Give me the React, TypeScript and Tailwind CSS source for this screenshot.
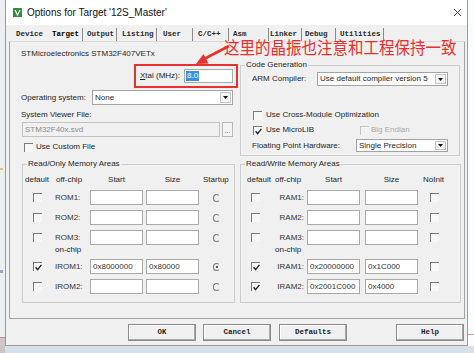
import React from 'react';

type Row = { on?: boolean; label: string; start?: string; size?: string; tail?: boolean; chip?: boolean };

const tabs = [
  { t: 'Device', cls: 'w-[36px] pl-[4px]' },
  { t: 'Target', cls: 'w-[35px] pl-[4px] border-r border-[#8a8a8a]', sel: true },
  { t: 'Output', cls: 'w-[34px] pl-[4px] border-r border-[#8a8a8a]' },
  { t: 'Listing', cls: 'w-[40px] pl-[5px] border-r border-[#8a8a8a]' },
  { t: 'User', cls: 'w-[36px] pl-[6px] border-r border-[#8a8a8a]' },
  { t: 'C/C++', cls: 'w-[36px] pl-[5px] border-r border-[#8a8a8a]' },
  { t: 'Asm', cls: 'w-[40px] pl-[4px] border-r border-[#8a8a8a]' },
  { t: 'Linker', cls: 'w-[33px] pl-[1px] border-r border-[#8a8a8a]' },
  { t: 'Debug', cls: 'w-[34px] pl-[3px] border-r border-[#8a8a8a]' },
  { t: 'Utilities', cls: 'w-[48px] pl-[4px] border-r border-[#8a8a8a]' },
];

const romRows: Row[] = [
  { label: 'ROM1:' },
  { label: 'ROM2:' },
  { label: 'ROM3:' },
  { label: 'on-chip', chip: true },
  { label: 'IROM1:', on: true, start: '0x8000000', size: '0x80000', tail: true },
  { label: 'IROM2:' },
];

const ramRows: Row[] = [
  { label: 'RAM1:' },
  { label: 'RAM2:' },
  { label: 'RAM3:' },
  { label: 'on-chip', chip: true },
  { label: 'IRAM1:', on: true, start: '0x20000000', size: '0x1C000' },
  { label: 'IRAM2:', on: true, start: '0x2001C000', size: '0x4000' },
];

function Check({ on = false, off = false }: { on?: boolean; off?: boolean }) {
  return (
    <span
      className={
        off
          ? 'relative inline-block w-[9px] h-[9px] shrink-0 border-t border-l border-[#c4c4c4] bg-[#f3f3f3]'
          : 'relative inline-block w-[9px] h-[9px] shrink-0 border-t border-l border-[#7a7a7a] bg-[#f7f7f7]'
      }
    >
      {on && (
        <svg className="absolute left-[1px] top-[1px]" width="7" height="7" viewBox="0 0 7 7">
          <path d="M0.6 3.2 L2.6 5.6 L6.4 0.9" stroke="#222" strokeWidth="1.4" fill="none" />
        </svg>
      )}
    </span>
  );
}

function Radio({ on = false }: { on?: boolean }) {
  return (
    <span className="relative inline-block w-[7px] h-[8px] shrink-0 rounded-full border border-[#7c7c7c] border-r-transparent">
      {on && <span className="absolute left-[1.5px] top-[2px] w-[2.5px] h-[2.5px] rounded-full bg-[#222]" />}
    </span>
  );
}

function Edit({ cls, value = '' }: { cls: string; value?: string }) {
  return (
    <div className={'h-[15px] bg-white border border-[#a9a9a9] text-[8px] leading-[13px] pl-[2px] text-[#333] ' + cls}>{value}</div>
  );
}

function Combo({ cls, value }: { cls: string; value: string }) {
  return (
    <div className={'flex items-stretch bg-white border border-[#a3a3a3] ' + cls}>
      <span className="flex-1 pl-[2px] text-[8px] leading-[12px] self-center">{value}</span>
      <span className="w-[11px] my-[1px] mr-[1px] border border-[#c4c4c4] bg-[#f4f4f4] flex items-center justify-center">
        <svg width="5" height="3" viewBox="0 0 5 3">
          <path d="M0 0h5L2.5 3z" fill="#111" />
        </svg>
      </span>
    </div>
  );
}

function MemGroup({
  title,
  heads,
  rows,
  right,
}: {
  title: string;
  heads: [string, string][];
  rows: Row[];
  right: boolean;
}) {
  return (
    <fieldset className={right ? 'w-[221px] h-[144px] border border-[#cdcdcd]' : 'ml-[1px] w-[213px] h-[144px] border border-[#cdcdcd]'}>
      <legend className="ml-[4px] px-[1px] text-[8px] leading-[10px]">{title}</legend>
      <div className={right ? 'mt-[6px] h-[10px] flex text-[8px] leading-[10px] pl-[6px]' : 'mt-[6px] h-[10px] flex text-[8px] leading-[10px] pl-[2px]'}>
        {heads.map(([h, c]) => (
          <span key={h} className={c}>
            {h}
          </span>
        ))}
      </div>
      {rows.map((r, i) =>
        r.chip ? (
          <div key={i} className={right ? 'h-[10px] text-[8px] leading-[10px] pl-[34px]' : 'h-[10px] text-[8px] leading-[10px] pl-[32px]'}>
            {r.label}
          </div>
        ) : (
          <div key={i} className={i === 4 ? 'mt-[4px] h-[15px] flex items-center pl-[10px]' : 'mt-[5px] h-[15px] flex items-center pl-[10px]'}>
            <Check on={r.on} />
            <span
              className={
                right
                  ? 'w-[47px] pr-[3px] text-right text-[8px] text-[#333]'
                  : 'ml-[13px] w-[35px] text-[8px] text-[#333]'
              }
            >
              {r.label}
            </span>
            <Edit cls="w-[53px]" value={r.start} />
            <Edit cls={right ? 'ml-[5px] w-[53px]' : 'ml-[3px] w-[53px]'} value={r.size} />
            {right ? (
              <span className="ml-[12px] flex">
                <Check />
              </span>
            ) : (
              <span className="ml-[14px] flex">
                <Radio on={r.tail} />
              </span>
            )}
          </div>
        )
      )}
    </fieldset>
  );
}

function Btn({ label, cls }: { label: string; cls: string }) {
  return (
    <div
      className={
        'h-[17px] w-[68px] flex items-center justify-center border border-[#8c8c8c] bg-[#f0f0f0] shadow-[inset_-1px_-1px_0_#a8a8a8,inset_1px_1px_0_#ffffff] font-["Liberation_Mono",monospace] font-bold text-[7.5px] ' +
        cls
      }
    >
      {label}
    </div>
  );
}

export default function App() {
  return (
    <div className="relative w-[474px] h-[353px] overflow-hidden flex flex-col bg-[#dbe3ec] text-[#1f1f1f] font-['Liberation_Sans',Arial,sans-serif]">
      <div className="flex h-[346px]">
        {/* window behind, left edge */}
        <div className="w-[5px] bg-[#eceeef] flex flex-col">
          <div className="h-[168px]" />
          <div className="h-[2px] w-[3px] bg-[#d6c77a]" />
          <div className="h-[100px]" />
          <div className="h-[3px] w-[3px] bg-[#9aa3c6]" />
          <div className="flex-1" />
          <div className="h-[1px] bg-[#d88]" />
          <div className="h-[8px] bg-[#c9c9c9]" />
        </div>

        {/* dialog */}
        <div className="w-[463px] border-x border-b border-[#9a9a9a] bg-[#f0f0f0] flex flex-col">
          <div className="h-[25px] bg-white flex items-center pl-[7px] pr-[6px]">
            <span className="w-[9px] h-[9px] bg-[#2f8f3a] flex items-center justify-center">
              <svg width="7" height="7" viewBox="0 0 7 7">
                <path d="M1 1 L3.5 6 L6 1" stroke="#fff" strokeWidth="1.3" fill="none" />
              </svg>
            </span>
            <span className="ml-[5px] text-[10px] text-[#111]">Options for Target '12S_Master'</span>
            <svg className="ml-auto" width="7" height="7" viewBox="0 0 7 7">
              <path d="M0 0 L7 7 M7 0 L0 7" stroke="#333" strokeWidth="0.9" />
            </svg>
          </div>

          {/* tabs */}
          <div className="h-[16px] flex items-end pl-[6px] font-['Liberation_Mono',monospace] text-[7.5px] font-bold">
            {tabs.map((t) => (
              <span key={t.t} className={'h-[13px] leading-[12px] ' + t.cls + (t.sel ? ' text-black' : ' text-[#2a2a2a]')}>
                {t.t}
              </span>
            ))}
          </div>

          {/* panel */}
          <div className="ml-[3px] w-[456px] h-[278px] border border-[#a3a3a3] border-t-[#dadada] flex pl-[11px] pr-[2px]">
            <div className="w-[214px] flex flex-col text-[8px]">
              <div className="mt-[7px] h-[10px] leading-[10px]">STMicroelectronics STM32F407VETx</div>
              <div className="mt-[10px] h-[14px] flex items-center justify-end pr-[2px]">
                <span>
                  <span className="underline">X</span>tal (MHz):
                </span>
                <div className="ml-[4px] w-[49px] h-[14px] bg-white border border-[#a9a9a9] flex items-center pl-[1px]">
                  <span className="bg-[#3c8fe0] text-white leading-[10px] px-[1px]">8.0</span>
                </div>
              </div>
              <div className="mt-[7px] h-[15px] flex items-center">
                <span className="w-[71px]">Operating system:</span>
                <Combo cls="w-[141px] h-[15px]" value="None" />
              </div>
              <div className="mt-[5px] h-[10px] leading-[10px]">System Viewer File:</div>
              <div className="mt-[2px] h-[15px] flex">
                <div className="ml-[1px] w-[198px] h-[15px] border border-[#c3c3c3] bg-[#f0f0f0] text-[#8c8c8c] leading-[13px] pl-[2px]">
                  STM32F40x.svd
                </div>
                <div className="ml-[2px] w-[11px] h-[15px] border border-[#b8b8b8] bg-[#f3f3f3] text-[7px] leading-[15px] text-center text-[#555]">
                  ...
                </div>
              </div>
              <div className="mt-[5px] h-[10px] flex items-center pl-[3px]">
                <Check />
                <span className="ml-[3px]">Use Custom File</span>
              </div>
              <div className="mt-[7px]">
                <MemGroup
                  title="Read/Only Memory Areas"
                  right={false}
                  rows={romRows}
                  heads={[
                    ['default', 'w-[31px]'],
                    ['off-chip', 'w-[34px]'],
                    ['Start', 'w-[53px] text-center'],
                    ['Size', 'ml-[3px] w-[53px] text-center'],
                    ['Startup', 'ml-[4px]'],
                  ]}
                />
              </div>
            </div>

            <div className="ml-[5px] flex flex-col text-[8px]">
              <fieldset className="mt-[18px] w-[220px] h-[96px] border border-[#cdcdcd]">
                <legend className="ml-[4px] px-[1px] leading-[10px]">Code Generation</legend>
                <div className="mt-[2px] h-[14px] flex items-center pl-[11px]">
                  <span className="w-[65px]">ARM Compiler:</span>
                  <Combo cls="w-[131px] h-[14px]" value="Use default compiler version 5" />
                </div>
                <div className="mt-[24px] h-[10px] flex items-center pl-[12px]">
                  <Check />
                  <span className="ml-[4px]">Use Cross-Module Optimization</span>
                </div>
                <div className="mt-[5px] h-[10px] flex items-center pl-[12px]">
                  <span className="w-[107px] flex items-center">
                    <Check on />
                    <span className="ml-[4px]">Use MicroLIB</span>
                  </span>
                  <Check off />
                  <span className="ml-[2px] text-[#a8a8a8]">Big Endian</span>
                </div>
                <div className="mt-[4px] h-[13px] flex items-center pl-[11px]">
                  <span className="w-[104px]">Floating Point Hardware:</span>
                  <Combo cls="w-[92px] h-[13px]" value="Single Precision" />
                </div>
              </fieldset>
              <div className="mt-[3px]">
                <MemGroup
                  title="Read/Write Memory Areas"
                  right
                  rows={ramRows}
                  heads={[
                    ['default', 'w-[28px]'],
                    ['off-chip', 'w-[32px]'],
                    ['Start', 'w-[53px] text-center'],
                    ['Size', 'ml-[5px] w-[53px] text-center'],
                    ['NoInit', 'ml-[5px]'],
                  ]}
                />
              </div>
            </div>
          </div>

          {/* buttons */}
          <div className="mt-[5px] h-[17px] flex pl-[122px]">
            <Btn label="OK" cls="" />
            <Btn label="Cancel" cls="ml-[7px]" />
            <Btn label="Defaults" cls="ml-[8px]" />
            <Btn label="Help" cls="ml-[49px]" />
          </div>
        </div>

        <div className="flex-1 bg-[#fafbfc] flex flex-col">
          <div className="flex-1" />
          <div className="h-[1px] mb-[11px] bg-[#e39a9a]" />
        </div>
      </div>
      <div className="flex-1 flex">
        <div className="w-[5px] bg-[#c6c6c6]" />
        <div className="flex-1 bg-[#d7dfe9]" />
      </div>

      {/* red annotation drawn over the dialog */}
      <div className="absolute left-[134px] top-[64px] w-[104px] h-[24px] border-2 border-[#e8322f]" />
      <svg className="absolute left-0 top-0" width="474" height="353" viewBox="0 0 474 353">
        <path d="M229 46 L205 58.5" stroke="#e8322f" strokeWidth="2.6" fill="none" />
        <path d="M196 64 L208.5 63.5 L203.5 54 Z" fill="#e8322f" />
      </svg>
      <div className="absolute left-[224px] top-[36px] text-[15.5px] leading-[18px] scale-y-[1.12] origin-top text-[#ee2d2d] font-['Noto_Sans_CJK_SC',sans-serif] whitespace-nowrap bg-transparent">
        这里的晶振也注意和工程保持一致
      </div>
    </div>
  );
}
